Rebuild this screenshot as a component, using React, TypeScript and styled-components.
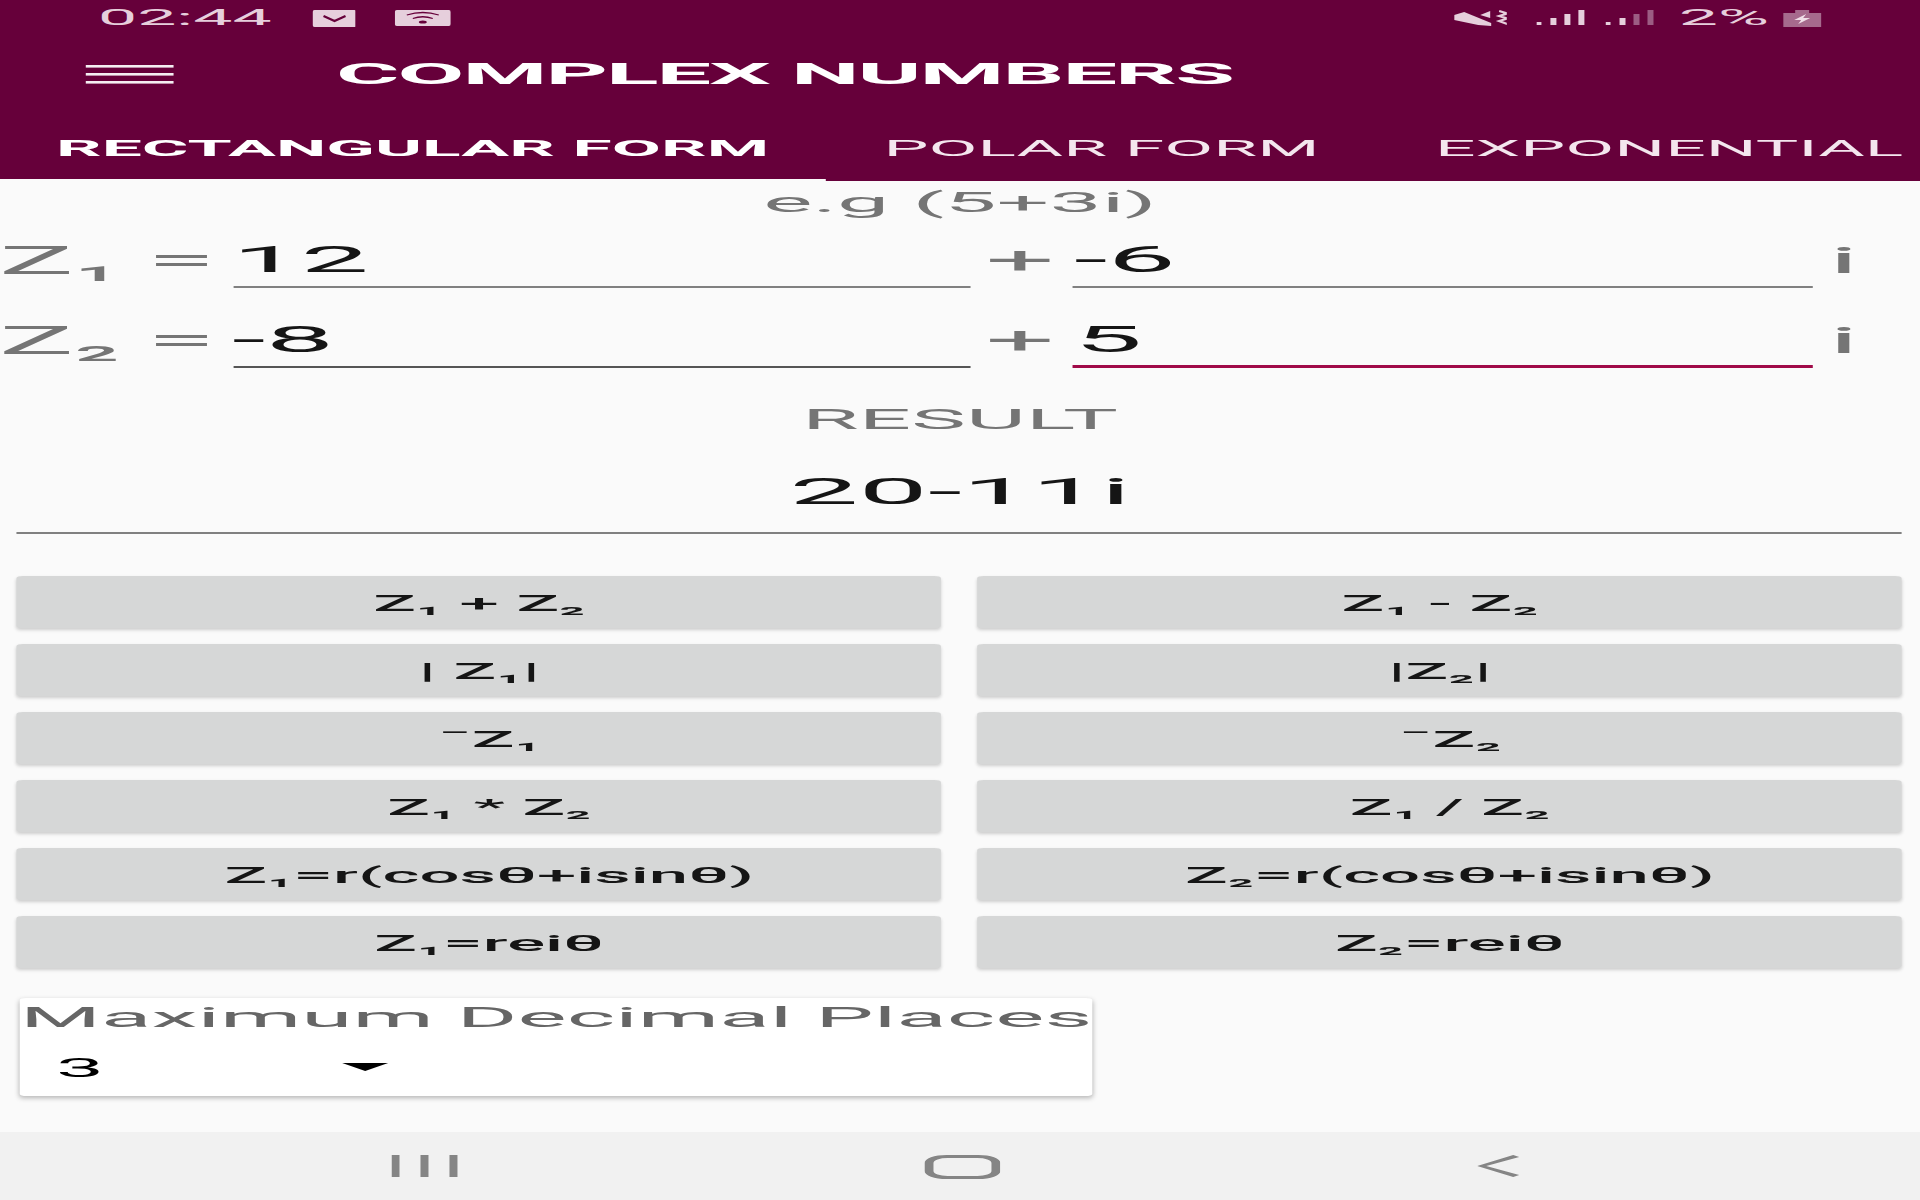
import React from "react";
import styled, { createGlobalStyle } from "styled-components";

const S = 3.29;
const x = (n: number) => `${(n / S).toFixed(2)}px`;

const Global = createGlobalStyle`
  html, body { margin: 0; padding: 0; background: #fafafa; overflow: hidden; }
  * { box-sizing: border-box; }
`;

const Stage = styled.div`
  width: ${x(1920)};
  height: 1200px;
  transform: scaleX(${S});
  transform-origin: 0 0;
  display: flex;
  flex-direction: column;
  font-family: Roboto, "Liberation Sans", sans-serif;
  background: #fafafa;
`;

const Header = styled.header`
  height: 181px;
  background: #66003a;
  display: flex;
  flex-direction: column;
  flex: none;
`;

const StatusBar = styled.div`
  height: 36px;
  display: flex;
  justify-content: space-between;
  align-items: center;
  padding: 0 ${x(98)} 0 ${x(98)};
  color: #e6cfdc;
`;

const StatusGroup = styled.div<{ $gap: number }>`
  display: flex;
  align-items: center;
  gap: ${(p) => x(p.$gap)};
`;

const StatusText = styled.span<{ $before?: number; $after?: number }>`
  font-size: 21.2px;
  line-height: 24px;
  margin-left: ${(p) => x(p.$before || 0)};
  margin-right: ${(p) => x(p.$after || 0)};
`;

const Glyph = styled.svg<{ $w: number; $h: number; $after?: number }>`
  width: ${(p) => x(p.$w)};
  height: ${(p) => p.$h}px;
  margin-right: ${(p) => x(p.$after || 0)};
  display: block;
  flex: none;
`;

const AppBar = styled.div`
  height: 75px;
  display: flex;
  align-items: center;
  padding-left: ${x(86)};
`;

const Title = styled.h1`
  margin: 0 0 0 ${x(162)};
  font-size: 29.5px;
  line-height: 36px;
  font-weight: 700;
  letter-spacing: -0.6px;
  color: #fff;
`;

const Tabs = styled.nav`
  flex: 1;
  display: grid;
  grid-template-columns: ${x(827)} ${x(578)} 1fr;
`;

const Tab = styled.div<{ $active?: boolean; $pad: number }>`
  display: flex;
  align-items: center;
  padding-left: ${(p) => x(p.$pad)};
  padding-top: 5px;
  height: 70px;
  font-size: 21.7px;
  font-weight: ${(p) => (p.$active ? 700 : 400)};
  color: ${(p) => (p.$active ? "#fff" : "#f4e6ee")};
  box-shadow: ${(p) => (p.$active ? "inset 0 -2px 0 #fafafa" : "none")};
  white-space: nowrap;
`;

const Main = styled.main`
  flex: 1;
  display: flex;
  flex-direction: column;
  min-height: 0;
`;

const Hint = styled.div`
  height: 36px;
  padding-top: 4px;
  text-align: center;
  font-size: 28.3px;
  line-height: 36px;
  color: #757575;
`;

const InputRow = styled.div`
  display: grid;
  grid-template-columns: ${x(232)} ${x(737)} ${x(105)} ${x(738)} 1fr;
  height: 61px;
  margin-top: 19px;
  &:first-of-type { margin-top: 0; }
  color: #757575;
`;

const Label = styled.div`
  margin-left: ${x(-1)};
  font-size: 38px;
  line-height: 50px;
  white-space: nowrap;
`;

const Equals = styled.span`
  margin-left: ${x(27)};
`;

const Field = styled.div<{ $focus?: boolean; $tone?: string }>`
  height: 52px;
  font-size: 37px;
  line-height: 48px;
  color: #151515;
  border-bottom: ${(p) =>
    p.$focus ? "3px solid #a00a48" : `2px solid ${p.$tone || "#808080"}`};
`;

const Plus = styled.div`
  padding-left: ${x(16.5)};
  font-size: 37px;
  line-height: 50px;
`;

const Suffix = styled.div`
  padding-left: ${x(17)};
  font-size: 37px;
  line-height: 50px;
`;

const ResultLabel = styled.div`
  margin-top: 26px;
  text-align: center;
  font-size: 28px;
  line-height: 34px;
  color: #757575;
  height: 34px;
`;

const ResultValue = styled.div`
  margin: 32px ${x(18)} 0;
  height: 65px;
  text-align: center;
  font-size: 37.5px;
  line-height: 44px;
  color: #151515;
  border-bottom: 2px solid #808080;
`;

const ButtonGrid = styled.div`
  margin-top: 42px;
  padding-left: ${x(16.5)};
  display: grid;
  grid-template-columns: ${x(925.5)} ${x(925)};
  column-gap: ${x(35.5)};
  row-gap: 15.6px;
`;

const CalcButton = styled.button<{ $indent?: boolean }>`
  height: 52.4px;
  border: none;
  padding: 2px 0 0 ${(p) => (p.$indent ? x(20) : 0)};
  border-radius: 2px;
  background: #d6d7d7;
  box-shadow: 0 2px 2px rgba(0, 0, 0, 0.18);
  font-family: inherit;
  font-size: 21.5px;
  font-weight: 500;
  color: #151515;
  text-align: center;
  white-space: pre;
`;

const Card = styled.div`
  margin: 30px 0 0 ${x(20)};
  width: ${x(1073)};
  height: 98px;
  background: #fff;
  border-radius: 2px;
  box-shadow: 0 2px 3px rgba(0, 0, 0, 0.28);
  color: #666;
`;

const CardLabel = styled.div`
  padding-left: 0;
  padding-top: 2px;
  font-size: 28.2px;
  line-height: 36px;
  white-space: nowrap;
`;

const SelectRow = styled.div`
  display: flex;
  align-items: center;
  margin-top: 14px;
  height: 36px;
  padding-left: ${x(36)};
`;

const SelectValue = styled.span`
  width: ${x(286)};
  font-size: 26px;
  line-height: 36px;
  color: #000;
`;

const Caret = styled.div`
  width: 0;
  height: 0;
  margin-top: -3px;
  border-left: ${x(24)} solid transparent;
  border-right: ${x(24)} solid transparent;
  border-top: 8px solid #000;
`;

const NavBar = styled.div`
  margin-top: auto;
  height: 68px;
  background: #f1f1f1;
  display: grid;
  grid-template-columns: ${x(392)} ${x(532)} ${x(554)} 1fr;
  padding-top: 23px;
  flex: none;
`;

const buttons: [string, string][] = [
  ["Z₁ + Z₂", "Z₁ - Z₂"],
  ["| Z₁|", "|Z₂|"],
  ["¯Z₁", "¯Z₂"],
  ["Z₁ * Z₂", "Z₁ / Z₂"],
  ["Z₁=r(cosθ+isinθ)", "Z₂=r(cosθ+isinθ)"],
  ["Z₁=reiθ", "Z₂=reiθ"],
];

const Signal = ({ weak }: { weak?: boolean }) => (
  <Glyph $w={50} $h={16} viewBox="0 0 50 16" preserveAspectRatio="none">
    <rect x="0" y="12" width="5" height="3" fill="#e6cfdc" />
    <rect x="14" y="8" width="6" height="7" fill="#e6cfdc" />
    <rect x="28" y="4" width="6" height="11" fill={weak ? "#9c5c83" : "#e6cfdc"} />
    <rect x="42" y="0" width="6" height="15" fill={weak ? "#9c5c83" : "#e6cfdc"} />
  </Glyph>
);

export default function App() {
  return (
    <Stage>
      <Global />
      <Header>
        <StatusBar>
          <StatusGroup $gap={39}>
            <StatusText $after={1}>02:44</StatusText>
            <Glyph $w={44} $h={17} viewBox="0 0 44 17" preserveAspectRatio="none">
              <rect x="0" y="0" width="44" height="17" rx="2" fill="#e6cfdc" />
              <path d="M11 6 L22 11 L33 6" fill="none" stroke="#66003a" strokeWidth="2.4" />
            </Glyph>
            <Glyph $w={56} $h={16} viewBox="0 0 56 16" preserveAspectRatio="none">
              <rect x="0" y="0" width="56" height="16" rx="2" fill="#e6cfdc" />
              <path d="M12 5 Q28 0 44 5 M18 8.5 Q28 5 38 8.5" fill="none" stroke="#66003a" strokeWidth="1.3" />
              <ellipse cx="28" cy="12" rx="4" ry="1.6" fill="#66003a" />
            </Glyph>
          </StatusGroup>
          <StatusGroup $gap={19}>
            <Glyph $w={54} $h={16} $after={10} viewBox="0 0 54 16" preserveAspectRatio="none">
              <path d="M0 5 L10 2 L37 13 L37 16 L24 15 L0 10 Z" fill="#e6cfdc" />
              <path d="M26 5 L36 1 L36 8 Z" fill="#e6cfdc" />
              <path d="M45 1 L53 3.5 L45 6 L53 8.5 L45 11 L53 14" fill="none" stroke="#e6cfdc" strokeWidth="2.2" />
            </Glyph>
            <Signal />
            <Signal weak />
            <StatusText $before={4} $after={-4}>2%</StatusText>
            <Glyph $w={38} $h={17} viewBox="0 0 38 17" preserveAspectRatio="none">
              <path d="M0 3 L12 3 L12 0 L26 0 L26 3 L38 3 L38 17 L0 17 Z" fill="#a66a8d" />
              <path d="M23 4 L11 10 L18 10 L15 14 L27 8 L20 8 Z" fill="#f0dfe8" />
            </Glyph>
          </StatusGroup>
        </StatusBar>
        <AppBar>
          <Glyph $w={88} $h={20} viewBox="0 0 88 20" preserveAspectRatio="none">
            <rect width="88" height="2.6" y="1" fill="#f5eef2" />
            <rect width="88" height="2.6" y="9" fill="#f5eef2" />
            <rect width="88" height="2.6" y="17" fill="#f5eef2" />
          </Glyph>
          <Title>COMPLEX NUMBERS</Title>
        </AppBar>
        <Tabs>
          <Tab $active $pad={56}>RECTANGULAR FORM</Tab>
          <Tab $pad={56.5}>POLAR FORM</Tab>
          <Tab $pad={30}>EXPONENTIAL</Tab>
        </Tabs>
      </Header>
      <Main>
        <Hint>e.g (5+3i)</Hint>
        <InputRow>
          <Label>Z₁<Equals>=</Equals></Label>
          <Field>12</Field>
          <Plus>+</Plus>
          <Field>-6</Field>
          <Suffix>i</Suffix>
        </InputRow>
        <InputRow>
          <Label>Z₂<Equals>=</Equals></Label>
          <Field $tone="#555">-8</Field>
          <Plus>+</Plus>
          <Field $focus>5</Field>
          <Suffix>i</Suffix>
        </InputRow>
        <ResultLabel>RESULT</ResultLabel>
        <ResultValue>20-11i</ResultValue>
        <ButtonGrid>
          {buttons.map(([a, b], i) => (
            <React.Fragment key={i}>
              <CalcButton $indent={i >= 2}>{a}</CalcButton>
              <CalcButton $indent={i >= 2}>{b}</CalcButton>
            </React.Fragment>
          ))}
        </ButtonGrid>
        <Card>
          <CardLabel>Maximum Decimal Places</CardLabel>
          <SelectRow>
            <SelectValue>3</SelectValue>
            <Caret />
          </SelectRow>
        </Card>
        <NavBar>
          <span />
          <Glyph $w={68} $h={22} viewBox="0 0 68 22" preserveAspectRatio="none">
            <path d="M4 0V22M33 0V22M62 0V22" stroke="#858585" strokeWidth="8" fill="none" />
          </Glyph>
          <Glyph $w={76} $h={24} viewBox="0 0 76 24" preserveAspectRatio="none">
            <path
              fillRule="evenodd"
              fill="#858585"
              d="M22 0H54A22 8 0 0 1 76 8V16A22 8 0 0 1 54 24H22A22 8 0 0 1 0 16V8A22 8 0 0 1 22 0ZM23 3A14 5 0 0 0 9 8V16A14 5 0 0 0 23 21H53A14 5 0 0 0 67 16V8A14 5 0 0 0 53 3Z"
            />
          </Glyph>
          <Glyph $w={42} $h={22} viewBox="0 0 42 22" preserveAspectRatio="none">
            <polygon points="36,0 42,2 9,11 42,20 36,22 0,11" fill="#858585" />
          </Glyph>
        </NavBar>
      </Main>
    </Stage>
  );
}
